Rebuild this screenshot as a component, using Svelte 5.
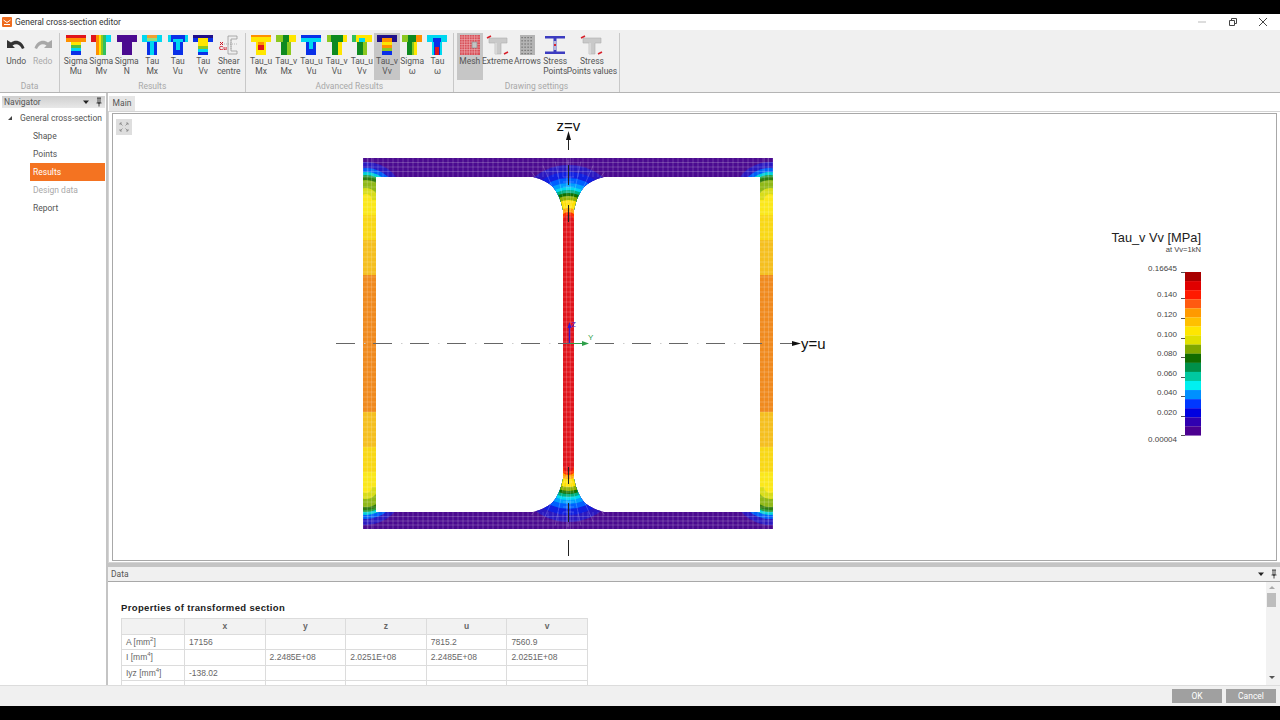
<script>
  const B = '#0a30e8', C = '#00d8f0', N = '#20108a', P = '#4b0a90', R = '#e0141c', O = '#ff9000', Y = '#ffe600', G = '#0f8a20', L = '#8cc820'

  const results = [
    { t: 'Sigma\nMu', r: [[0,0,20,3,R],[0,3,20,4,O],[0,7,20,3,Y],[0,10,20,3,'#50c040'],[0,13,20,3,C],[0,16,20,4,B]] },
    { t: 'Sigma\nMv', r: [[0,0,5,20,R],[5,0,3,20,O],[8,0,2,20,Y],[10,0,2,20,L],[12,0,3,20,'#30c060'],[15,0,5,20,C]] },
    { t: 'Sigma\nN', r: [[0,0,20,20,P]] },
    { t: 'Tau\nMx', r: [[0,0,20,7,C],[5,0,10,3,'#f0a030'],[5,3,10,3,'#90e080'],[0,7,20,13,B],[8,7,4,13,C]] },
    { t: 'Tau\nVu', r: [[0,0,20,7,B],[0,0,3,7,C],[17,0,3,7,C],[5,4,10,3,C],[5,7,10,13,B],[8,7,4,8,C]] },
    { t: 'Tau\nVv', r: [[0,0,20,3,N],[0,3,20,4,B],[5,3,10,4,Y],[5,7,10,4,Y],[5,11,10,3,L],[5,14,10,3,C],[5,17,10,3,B]] }
  ]
  const advanced = [
    { t: 'Tau_u\nMx', r: [[0,0,20,2,O],[0,2,20,5,Y],[5,7,10,3,O],[5,10,10,5,R],[5,15,10,5,Y],[5,7,2,13,Y],[13,7,2,13,Y]] },
    { t: 'Tau_v\nMx', r: [[0,0,7,7,L],[7,0,6,7,G],[13,0,7,7,Y],[5,7,10,13,G],[11,7,4,13,L]] },
    { t: 'Tau_u\nVu', r: [[0,0,20,7,B],[0,3,20,4,C],[6,0,8,3,B],[5,7,10,13,B],[8,7,4,7,C]] },
    { t: 'Tau_v\nVu', r: [[0,0,20,7,G],[0,0,4,7,L],[16,0,4,7,Y],[5,7,10,13,G],[11,7,4,13,Y]] },
    { t: 'Tau_u\nVv', r: [[0,0,20,7,Y],[0,0,4,7,'#30c060'],[7,3,6,4,C],[5,7,10,13,G],[11,7,4,13,L]] },
    { t: 'Tau_v\nVv', sel: true, r: [[0,0,20,7,N],[5,3,10,4,O],[5,7,10,3,Y],[5,10,10,3,O],[5,13,10,3,L],[5,16,10,4,B]] },
    { t: 'Sigma\nω', r: [[0,0,20,7,G],[0,0,6,7,L],[14,0,6,7,O],[5,7,10,13,L],[5,7,5,13,G],[12,7,3,13,Y]] },
    { t: 'Tau\nω', r: [[0,0,20,7,C],[6,3,8,4,B],[5,7,10,13,C],[7,7,6,13,B],[8,12,4,8,R]] }
  ]

  const menu = ['General cross-section', 'Shape', 'Points', 'Results', 'Design data', 'Report']

  // legend, top to bottom
  const bar = ['#a80000','#e00000','#ff1a00','#ff5a10','#ff9a00','#ffc000','#ffe600','#e0e000','#80a800','#106c00','#00904a','#00c8a0','#00f0f0','#0090ff','#0038ff','#0000e0','#3000b0','#4b0090']
  const ticks = [['0.140',298],['0.120',318],['0.100',338],['0.080',357],['0.060',377],['0.040',396],['0.020',416]]

  // contour bands around the web ends and the plate corners
  const webBands = [[55,'#2a18c0'],[48,'#1020e0'],[42,'#0060ff'],[37,'#00a0ff'],[33,'#00d8f0'],[30,'#00b080'],[27,'#107000'],[24,'#90b000'],[20,'#ffe000'],[12,'#ffa000'],[8,'#ff3000'],[5,R]]
  const cornerBands = [[38,'#2a18c0'],[32,'#0060f8'],[28,'#00d0d8'],[25,'#30a040'],[23,'#307c10'],[20,'#90b818'],[12,'#d8dc18'],[6,'#fbe81a']]
  const plate = [[177,'#fbe81a'],[215,'#f9d815'],[240,'#f5bf1f'],[275,'#f08a1e'],[412,'#f5bf1f'],[447,'#f9d815'],[472,'#fbe81a']]
  const plateEnd = [215,240,275,412,447,472,510]

  const half = (cx, cy, r, up) => `M${cx - r} ${cy}A${r} ${r} 0 0 ${up ? 1 : 0} ${cx + r} ${cy}Z`
  const steps = (from, to, d) => {
    const out = []
    for (let v = from; v <= to; v += d) out.push(v)
    return out
  }
  const fan = steps(-48, 48, 12).map((a) => {
    const s = Math.sin(a * Math.PI / 180), c = Math.cos(a * Math.PI / 180)
    return [568 + 12 * s, 222 - 12 * c, 568 + 62 * s, 222 - 62 * c]
  })
  const dashes = steps(336, 780, 37).map((x) => `M${x} 343.500h${x === 780 ? 14 : 19}`).join('')
  const dots = steps(364, 770, 37).map((x) => `M${x} 343.500h1.500`).join('')
</script>

{#snippet tee(r)}
  <svg class="ico" viewBox="0 0 20 20">
    <g clip-path="url(#tee)">
      {#each r as [x, y, w, h, c]}
        <rect {x} {y} width={w} height={h} fill={c} />
      {/each}
    </g>
  </svg>
{/snippet}

{#snippet greyTee()}
  <svg class="ico" viewBox="0 0 24 20">
    <path d="M3 3h18v5h-6v11H9V8H3z" fill="#c9c9c9" stroke="#b0b0b0" stroke-width=".6" />
    <path d="M1 3l4-2M18 19l4-2" stroke="#d8202a" stroke-width="1.6" />
    <path d="M10 8v11" stroke="#e8e8e8" />
  </svg>
{/snippet}

{#snippet pins()}
  <svg viewBox="0 0 22 10">
    <path d="M2 3.500h6L5 7z" fill="#222" />
    <path d="M16 1h4M17 1v5h2V1M15.500 6h5M18 6v3.500" stroke="#222" fill="none" stroke-width=".8" />
  </svg>
{/snippet}

<div class="screen">
  <svg class="defs" width="0" height="0">
    <defs>
      <clipPath id="tee"><path d="M0 0h20v7h-5v13H5V7H0z" /></clipPath>
      <clipPath id="section">
        <rect x="363" y="158" width="410" height="19" />
        <rect x="363" y="512" width="410" height="17" />
        <rect x="363" y="158" width="13" height="371" />
        <rect x="760" y="158" width="13" height="371" />
        <rect x="563" y="158" width="11" height="371" />
        <path d="M528 176Q545 179 553 187Q560 195 563 210H574Q577 195 584 187Q592 179 609 176Z" />
        <path d="M528 513Q545 510 553 502Q560 494 563 479H574Q577 494 584 502Q592 510 609 513Z" />
      </clipPath>
    </defs>
  </svg>

  <div class="black"></div>

  <header class="title">
    <svg class="logo" viewBox="0 0 10 10">
      <rect width="10" height="10" rx="1" fill="#ee6c1f" />
      <path d="M1.500 3L5 5.500 8.500 3M2 7.500h6" stroke="#fff" fill="none" />
    </svg>
    <span class="caption">General cross-section editor</span>
    <div class="win">
      <svg viewBox="0 0 10 10"><path d="M0 5h8" stroke="#bbb" /></svg>
      <svg viewBox="0 0 10 10"><path d="M1.500 3.500h5v5h-5zM3.500 3.500v-2h5v5h-2" stroke="#444" fill="none" /></svg>
      <svg viewBox="0 0 10 10"><path d="M1 1l8 8M9 1l-8 8" stroke="#444" fill="none" /></svg>
    </div>
  </header>

  <section class="ribbon">
    <div class="group first">
      <div class="btns">
        <div class="b">
          <svg class="ico" viewBox="0 0 20 20"><path d="M1 5v8h8L6.500 10.500C10 8 14 9 16 14l2.500-1C16 6 10 4 5 7.500z" fill="#333" /></svg>
          <span>Undo</span>
        </div>
        <div class="b off">
          <svg class="ico" viewBox="0 0 20 20"><path d="M19 5v8h-8l2.500-2.500C10 8 6 9 4 14l-2.500-1C4 6 10 4 15 7.500z" fill="#a8a8a8" /></svg>
          <span>Redo</span>
        </div>
      </div>
      <div class="glabel">Data</div>
    </div>

    <div class="group">
      <div class="btns">
        {#each results as item}
          <div class="b">{@render tee(item.r)}<span>{item.t}</span></div>
        {/each}
        <div class="b">
          <svg class="ico" viewBox="0 0 20 20">
            <path d="M9 1h9v3h-6v12h6v3H9z" fill="#eee" stroke="#999" stroke-width=".8" />
            <path d="M3 9h15M12 5v10" stroke="#999" stroke-width=".6" stroke-dasharray="1 1" />
            <path d="M1 7l3 3M4 7l-3 3" stroke="#d01020" />
            <text x="0" y="15" class="cs">Cu</text>
          </svg>
          <span>Shear{'\n'}centre</span>
        </div>
      </div>
      <div class="glabel">Results</div>
    </div>

    <div class="group adv">
      <div class="btns">
        {#each advanced as item}
          <div class="b" class:sel={item.sel}>{@render tee(item.r)}<span>{item.t}</span></div>
        {/each}
      </div>
      <div class="glabel">Advanced Results</div>
    </div>

    <div class="group">
      <div class="btns">
        <div class="b sel">
          <svg class="ico" viewBox="0 0 20 20">
            <rect width="20" height="20" fill="#d8525a" />
            {#each steps(2, 18, 2.500) as v}
              <path d="M{v} 0v20M0 {v}h20" stroke="#f0b8bc" stroke-width=".5" />
            {/each}
            <rect x="12" y="7" width="5" height="6" fill="#c4c4c4" stroke="#777" stroke-width=".5" />
          </svg>
          <span>Mesh</span>
        </div>
        <div class="b w30">{@render greyTee()}<span>Extreme</span></div>
        <div class="b w30">
          <svg class="ico" viewBox="0 0 20 20">
            <rect x="2" width="15" height="20" fill="#b4b4b4" />
            {#each steps(3.500, 15, 3) as x}
              {#each steps(2, 18, 3.200) as y}
                <rect {x} {y} width="1.200" height="1.200" fill="#666" />
              {/each}
            {/each}
          </svg>
          <span>Arrows</span>
        </div>
        <div class="b">
          <svg class="ico" viewBox="0 0 20 20">
            <path d="M0 1h20v2.500H11.500v13H20V19H0v-2.500h8.500v-13H0z" fill="#3c3cc0" />
            <rect x="8.500" y="6" width="3" height="9" fill="#b8b8d8" />
            <rect x="9" y="9" width="2" height="2" fill="#d8202a" />
          </svg>
          <span>Stress{'\n'}Points</span>
        </div>
        <div class="b w48">{@render greyTee()}<span>Stress{'\n'}Points values</span></div>
      </div>
      <div class="glabel">Drawing settings</div>
    </div>
  </section>

  <main class="body">
    <nav class="nav">
      <div class="navhead">
        <span>Navigator</span>
        {@render pins()}
      </div>
      {#each menu as m, i}
        <div class="item" class:root={i === 0} class:active={m === 'Results'} class:dis={m === 'Design data'}>
          {#if i === 0}<i class="arrow"></i>{/if}{m}
        </div>
      {/each}
    </nav>

    <div class="work">
      <div class="tabs"><span class="tab">Main</span></div>
      <div class="outer">
        <div class="stage">
          <svg class="draw" viewBox="113 114 1162 446" width="1162" height="446">
            <g clip-path="url(#section)">
              <rect x="363" y="158" width="410" height="371" fill={P} />
              {#each [363, 760] as x}
                {#each plate as [y, c], i}
                  <rect {x} {y} width="13" height={plateEnd[i] - y} fill={c} />
                {/each}
                {@const cx = x === 363 ? 366 : 770}
                {#each cornerBands as [r, c]}
                  <path d={half(cx, 200, r, true)} fill={c} />
                  <path d={half(cx, 487, r, false)} fill={c} />
                {/each}
              {/each}
              <rect x="563" y="218" width="11" height="251" fill={R} />
              {#each webBands as [r, c]}
                <path d={half(568.500, 220, r, true)} fill={c} />
                <path d={half(568.500, 467, r, false)} fill={c} />
              {/each}

              <g class="mesh">
                {#each steps(363, 773, 5) as x}
                  <path d="M{x} 158V177M{x} 512V529" />
                {/each}
                {#each [162.500, 167, 171.500, 516.500, 521, 525] as y}
                  <path d="M363 {y}H773" />
                {/each}
                {#each [367.300, 371.600, 764.300, 768.600, 566.600, 570.300] as x}
                  <path d="M{x} 158V529" />
                {/each}
                {#each steps(177, 512, 5) as y}
                  <path d="M363 {y}H376M760 {y}H773M563 {y}H574" />
                {/each}
                {#each fan as [a, b, c, d]}
                  <path d="M{a} {b}L{c} {d}M{a} {687 - b}L{c} {687 - d}" />
                {/each}
              </g>
            </g>

            <!-- axes -->
            <path class="axis dark" d="M568.500 165V185M568.500 205V222M568.500 467V484M568.500 503V522" />
            <path class="axis dark" d="M568.500 150V136M568.500 540V556" />
            <path d="M568.500 131l-2.500 9h5z" fill="#111" />
            <text x="568.500" y="131" class="ax" text-anchor="middle">z=v</text>

            <path class="axis" d={dashes} />
            <path class="faint" d={dots} />
            <path d="M801 343.500l-9-2.500v5z" fill="#111" />
            <text x="801" y="349" class="ax">y=u</text>

            <path d="M569.500 343v-18" stroke="#3a18c8" stroke-width="1.500" />
            <path d="M569.500 322l-2 6h4z" fill="#3a18c8" />
            <text x="571" y="327" class="tiny purple">Z</text>
            <path d="M570 343.500h14" stroke="#2ea04a" stroke-width="1" />
            <path d="M589 343.500l-7-2.500v5z" fill="#2ea04a" />
            <text x="588" y="340" class="tiny green">Y</text>

            <!-- legend -->
            <text x="1201" y="242" class="lt" text-anchor="end">Tau_v Vv [MPa]</text>
            <text x="1201" y="252" class="ls" text-anchor="end">at Vv=1kN</text>
            {#each bar as c, i}
              <rect x="1185" y={272 + i * 9.080} width="16" height="9.200" fill={c} />
            {/each}
            <path d="M1181 272.500h4M1181 435.500h4" stroke="#555" />
            <text x="1177" y="271" class="ll" text-anchor="end">0.16645</text>
            <text x="1177" y="442" class="ll" text-anchor="end">0.00004</text>
            {#each ticks as [t, y]}
              <path d="M1181 {y + .5}h4" stroke="#555" />
              <text x="1177" y={y - 1.500} class="ll" text-anchor="end">{t}</text>
            {/each}
          </svg>
          <div class="expand">
            <svg viewBox="0 0 16 16"><path d="M4 4l2.500 2.500M4 4h2M4 4v2M12 4L9.500 6.500M12 4h-2M12 4v2M4 12l2.500-2.500M4 12h2M4 12v-2M12 12L9.500 9.500M12 12h-2M12 12v-2" stroke="#888" fill="none" stroke-width=".8" /></svg>
          </div>
        </div>
      </div>

      <div class="split"></div>

      <div class="datahead">
        <span>Data</span>
        {@render pins()}
      </div>
      <div class="data">
        <div class="sheet">
          <h3>Properties of transformed section</h3>
          <table>
            <thead>
              <tr><th></th><th>x</th><th>y</th><th>z</th><th>u</th><th>v</th></tr>
            </thead>
            <tbody>
              <tr><td>A [mm<sup>2</sup>]</td><td>17156</td><td></td><td></td><td>7815.2</td><td>7560.9</td></tr>
              <tr><td>I [mm<sup>4</sup>]</td><td></td><td>2.2485E+08</td><td>2.0251E+08</td><td>2.2485E+08</td><td>2.0251E+08</td></tr>
              <tr><td>Iyz [mm<sup>4</sup>]</td><td>-138.02</td><td></td><td></td><td></td><td></td></tr>
              <tr><td></td><td></td><td></td><td></td><td></td><td></td></tr>
            </tbody>
          </table>
        </div>
        <div class="scroll">
          <i class="up"></i>
          <b class="thumb"></b>
          <i class="down"></i>
        </div>
      </div>
    </div>
  </main>

  <footer class="foot">
    <button>OK</button>
    <button>Cancel</button>
  </footer>

  <div class="black"></div>
</div>

<style>
  :global(body) { margin: 0; background: #000; }
  .screen {
    width: 1280px;
    height: 720px;
    display: flex;
    flex-direction: column;
    overflow: hidden;
    font-family: Roboto, "Open Sans", sans-serif;
    color: #555;
    background: #fff;
  }
  .defs { position: absolute; }
  .black { height: 14px; background: #000; flex: none; }

  .title {
    height: 16px;
    flex: none;
    display: flex;
    align-items: center;
    padding-left: 2px;
    background: #fff;
  }
  .logo { width: 10px; height: 10px; }
  .caption { margin-left: 3px; font-size: 8.500px; color: #333; }
  .win { margin-left: auto; display: flex; gap: 20px; padding-right: 12px; }
  .win svg { width: 10px; height: 10px; }

  .ribbon {
    height: 63px;
    flex: none;
    box-sizing: border-box;
    display: flex;
    background: #f0f0f0;
    border-bottom: 1px solid #b4b4b4;
    padding-top: 3px;
  }
  .group {
    display: flex;
    flex-direction: column;
    padding: 0 3px;
    border-right: 1px solid #c8c8c8;
  }
  .btns { display: flex; height: 47px; }
  .b {
    width: 25.500px;
    display: flex;
    flex-direction: column;
    align-items: center;
    padding-top: 2px;
    box-sizing: border-box;
    font-size: 8.500px;
    line-height: 9.500px;
    text-align: center;
    white-space: pre;
    color: #555;
  }
  .first .b { width: 26.500px; }
  .adv .b { width: 25.200px; }
  .b.off { color: #aaa; }
  .b.sel { background: #c6c6c6; }
  .b.w30 { width: 30px; }
  .b.w48 { width: 48px; }
  .ico { width: 20px; height: 20px; margin-bottom: 2px; flex: none; filter: blur(.3px); }
  .w30 .ico:first-child { width: 24px; }
  .w48 .ico { width: 24px; }
  .cs { font: bold 6px "Liberation Sans", sans-serif; fill: #d01020; }
  .glabel {
    height: 12px;
    line-height: 12px;
    text-align: center;
    font-size: 8.500px;
    color: #a8a8a8;
  }

  .body { flex: 1; min-height: 0; display: flex; }
  .nav {
    width: 108px;
    flex: none;
    box-sizing: border-box;
    border-right: 2px solid #c4c4c4;
    padding: 3px 1px 0 2px;
    font-size: 8.500px;
  }
  .navhead {
    height: 12px;
    display: flex;
    align-items: center;
    justify-content: space-between;
    padding: 0 2px;
    margin-bottom: 1px;
    background: linear-gradient(#cfcfcf, #e8e8e8);
  }
  .navhead svg, .datahead svg { width: 22px; height: 10px; }
  .item {
    height: 18px;
    line-height: 18px;
    padding-left: 3px;
    margin-left: 28px;
    white-space: nowrap;
  }
  .item.root { margin-left: 0; padding-left: 18px; position: relative; }
  .arrow {
    position: absolute;
    left: 6px;
    top: 7px;
    border-left: 4px solid transparent;
    border-bottom: 4px solid #444;
  }
  .item.active { background: #f47321; color: #fff; }
  .item.dis { color: #aaa; }

  .work { flex: 1; min-width: 0; display: flex; flex-direction: column; }
  .tabs { height: 18px; flex: none; padding: 3px 0 0 1px; box-sizing: border-box; }
  .tab {
    display: block;
    width: 26px;
    height: 15px;
    line-height: 15px;
    text-align: center;
    font-size: 8.500px;
    background: #e6e6e6;
  }
  .outer {
    height: 452px;
    flex: none;
    box-sizing: border-box;
    padding: 1px 3px 3px;
    border: 1px solid #d4d4d4;
    border-right: none;
  }
  .stage {
    position: relative;
    height: 448px;
    box-sizing: border-box;
    border: 1px solid #a8a8a8;
    overflow: hidden;
  }
  .draw { display: block; }
  .expand {
    position: absolute;
    left: 3px;
    top: 5px;
    width: 16px;
    height: 16px;
    background: #dedede;
  }
  .expand svg { display: block; }
  .mesh path { stroke: #fff; stroke-width: .55; opacity: .36; fill: none; }
  .axis { stroke: #666; stroke-width: 1; fill: none; }
  .axis.dark { stroke: #222; }
  .faint { stroke: #ccc; stroke-width: 1; fill: none; }
  text { font-family: "Liberation Sans", Arial, sans-serif; }
  .ax { font-size: 15px; fill: #111; }
  .tiny { font-size: 8px; }
  .purple { fill: #5020c0; }
  .green { fill: #2ea04a; }
  .lt { font-size: 12.800px; fill: #222; }
  .ls { font-size: 7.600px; fill: #444; }
  .ll { font-size: 8px; fill: #444; }

  .split { height: 4px; flex: none; background: #c4c4c4; }
  .datahead {
    height: 14px;
    flex: none;
    display: flex;
    align-items: center;
    justify-content: space-between;
    padding: 0 2px 0 3px;
    background: #f0f0f0;
    border-bottom: 1px solid #a8a8a8;
    font-size: 8.500px;
  }
  .data { flex: 1; min-height: 0; display: flex; overflow: hidden; }
  .sheet { flex: 1; padding: 20px 0 0 13px; }
  h3 {
    margin: 0 0 4px;
    font: bold 9.500px/12px "Liberation Sans", Arial, sans-serif;
    letter-spacing: .35px;
    color: #222;
  }
  table {
    border-collapse: collapse;
    table-layout: fixed;
    width: 467px;
    font: 8.500px "Liberation Sans", Arial, sans-serif;
    color: #666;
  }
  th, td {
    height: 15.500px;
    padding: 0 0 0 4px;
    border: 1px solid #dcdcdc;
    box-sizing: border-box;
    text-align: left;
    font-weight: normal;
  }
  th { background: #f2f2f2; text-align: center; padding: 0; font-weight: bold; }
  th:first-child, td:first-child { width: 63px; }
  sup { font-size: 6px; line-height: 0; }
  .scroll {
    width: 14px;
    flex: none;
    background: #f2f2f2;
    position: relative;
  }
  .thumb { position: absolute; top: 11px; left: 1px; width: 9px; height: 14px; background: #bdbdbd; }
  .up, .down { position: absolute; left: 3px; border-left: 3px solid transparent; border-right: 3px solid transparent; }
  .up { top: 4px; border-bottom: 3px solid #aaa; }
  .down { bottom: 6px; border-top: 3px solid #555; }

  .foot {
    height: 21px;
    flex: none;
    box-sizing: border-box;
    border-top: 1px solid #dcdcdc;
    background: #f0f0f0;
    display: flex;
    justify-content: flex-end;
    gap: 4px;
    padding: 3px 4px 0 0;
  }
  button {
    width: 50px;
    height: 14px;
    padding: 0;
    border: none;
    background: #a0a0a0;
    color: #fff;
    font: 8.500px Roboto, sans-serif;
  }
</style>
